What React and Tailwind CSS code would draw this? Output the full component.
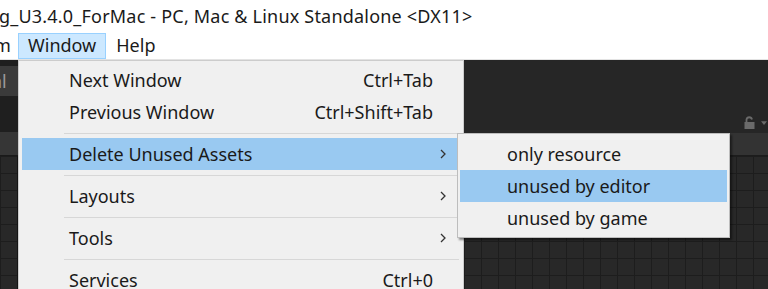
import React from "react";

const font = { fontFamily: '"Noto Sans", "Open Sans", sans-serif' };

function Sep() {
  return (
    <div className="h-[10px] flex items-center pl-[42px] pr-[1px]">
      <div className="h-px w-full bg-[#d7d7d7]" />
    </div>
  );
}

function Item({ label, shortcut, arrow, active }) {
  return (
    <div
      className={
        "h-[32px] flex items-center pl-[47px] pr-[12px] " +
        (active ? "bg-[#99c9f1]" : "")
      }
    >
      <span className="flex-1">{label}</span>
      {shortcut && <span className="mr-[15px]">{shortcut}</span>}
      {arrow && (
        <svg width="10" height="12" viewBox="0 0 10 12">
          <path d="M3 2 L7 6 L3 10" fill="none" stroke="#333" strokeWidth="1.3" />
        </svg>
      )}
    </div>
  );
}

function Grid({ className }) {
  return (
    <div
      className={
        "bg-[#282828] bg-[linear-gradient(to_right,#1d1d1d_1px,transparent_1px),linear-gradient(to_bottom,#1d1d1d_1px,transparent_1px)] bg-[size:17px_17px] " +
        className
      }
    />
  );
}

export default function App() {
  return (
    <div
      className="relative w-[768px] h-[289px] overflow-hidden bg-white text-[18px] text-[#1a1a1a]"
      style={font}
    >
      {/* title bar */}
      <div className="h-[32px] flex items-center whitespace-nowrap">
        <span className="ml-[-1px] tracking-[0.2px]">g_U3.4.0_ForMac - PC, Mac &amp; Linux Standalone &lt;DX11&gt;</span>
      </div>
      {/* menu bar */}
      <div className="h-[28px] flex items-center whitespace-nowrap border-b border-[#e3e3e3]">
        <span className="ml-[-6px] w-[24px]">m</span>
        <span className="h-[26px] flex items-center px-[9px] bg-[#cce8ff] border border-[#99d1ff]">Window</span>
        <span className="ml-[10px]">Help</span>
      </div>
      {/* editor underneath */}
      <div className="flex h-[229px]">
        <div className="w-[18px] flex flex-col bg-[#1e1e1e]">
          <div className="h-[6px] bg-[#1e1e1e]" />
          <div className="h-[30px] bg-[#3a3a3a] text-[#9a9a9a] overflow-hidden whitespace-nowrap flex items-center">
            <span className="ml-[-8px]">al</span>
          </div>
          <div className="h-[36px] bg-[#1f1f1f]" />
          <div className="h-[24px] bg-[#363636] border-b border-[#1a1a1a]" />
          <Grid className="flex-1 border-r border-[#151515]" />
        </div>
        <div className="w-[446px]" />
        <div className="flex-1 flex flex-col bg-[#262626]">
          <div className="h-[73px] flex items-end justify-end pb-[4px] pr-[1px] gap-[6px]">
            <svg width="11" height="13" viewBox="0 0 11 13">
              <path d="M2.5 6 V3.5 A2.8 2.8 0 0 1 8 3.5" fill="none" stroke="#6a6a6a" strokeWidth="1.8" />
              <rect x="0.5" y="6" width="10" height="7" fill="#6a6a6a" />
            </svg>
            <svg width="6" height="5" viewBox="0 0 8 6" className="mb-[3px]">
              <path d="M0 0 L8 0 L4 5 Z" fill="#6a6a6a" />
            </svg>
          </div>
          <div className="h-[23px] bg-[#333333] border-b border-[#1c1c1c]" />
          <Grid className="flex-1" />
        </div>
      </div>

      {/* main dropdown menu */}
      <div className="absolute left-[18px] top-[60px] w-[446px] h-[240px] bg-[#f0f0f0] border border-[#cccccc] pt-[3px] px-[3px]">
        <Item label="Next Window" shortcut="Ctrl+Tab" />
        <Item label="Previous Window" shortcut="Ctrl+Shift+Tab" />
        <Sep />
        <Item label="Delete Unused Assets" arrow active />
        <Sep />
        <Item label="Layouts" arrow />
        <Sep />
        <Item label="Tools" arrow />
        <Sep />
        <Item label="Services" shortcut="Ctrl+0" />
      </div>

      {/* submenu */}
      <div className="absolute left-[457px] top-[133px] w-[273px] h-[105px] bg-[#f0f0f0] border border-[#bdbdbd] pt-[4px] px-[2px] shadow-[2px_2px_2px_rgba(0,0,0,0.45)]">
        <div className="h-[32px] flex items-center pl-[47px]">only resource</div>
        <div className="h-[32px] flex items-center pl-[47px] bg-[#99c9f1]">unused by editor</div>
        <div className="h-[32px] flex items-center pl-[47px]">unused by game</div>
      </div>
    </div>
  );
}
